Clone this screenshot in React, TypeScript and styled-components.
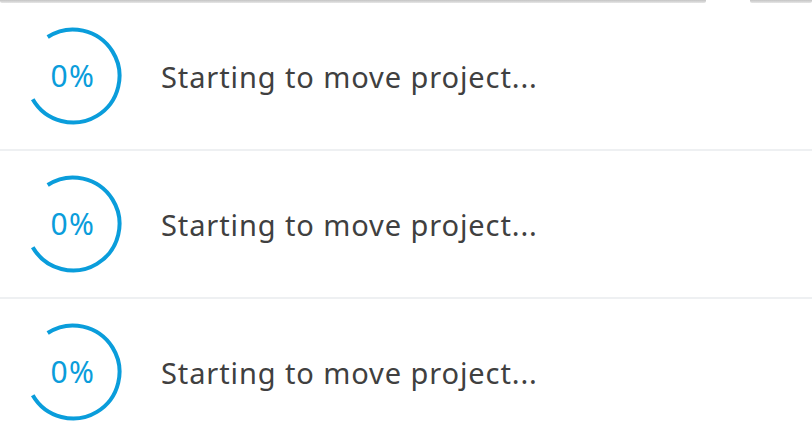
import { createGlobalStyle, styled } from "styled-components"

const GlobalStyle = createGlobalStyle`
  html, body {
    margin: 0;
    padding: 0;
    background: #ffffff;
  }
  body {
    font-family: "Noto Sans", "Open Sans", sans-serif;
    overflow: hidden;
  }
`

const Panel = styled.div`
  width: 812px;
  display: flex;
  flex-flow: column nowrap;
`

const TopEdge = styled.div`
  display: flex;
  gap: 44px;
  height: 3px;
`

const EdgeSegment = styled.div<{ $width?: number }>`
  height: 3px;
  flex: ${p => (p.$width ? `0 0 ${p.$width}px` : "1 1 auto")};
  background: linear-gradient(to bottom, #c4c4c4, #e6e6e6);
  border-radius: 0 0 2px 2px;
`

const Row = styled.div`
  display: flex;
  align-items: center;
  height: 146px;
  padding-left: 24px;
  gap: 39px;
  border-bottom: 2px solid #eef0f2;
  box-sizing: content-box;
`

const Spinner = styled.div`
  position: relative;
  width: 98px;
  height: 98px;
  flex: 0 0 98px;
  display: flex;
  align-items: center;
  justify-content: center;
`

const Ring = styled.svg`
  position: absolute;
  inset: 0;
`

const Percent = styled.span`
  font-size: 30px;
  letter-spacing: 1.5px;
  color: #0a9ddb;
  line-height: 1;
  margin-left: 0;
`

const Message = styled.span`
  font-size: 29px;
  letter-spacing: 0.9px;
  color: #404040;
  line-height: 1;
`

// arc from -123deg clockwise to 150deg, radius 46.5 around the centre
const arcPath = (() => {
  const cx = 49
  const cy = 49
  const r = 46.5
  const a0 = (-123 * Math.PI) / 180
  const a1 = (150 * Math.PI) / 180
  const x0 = cx + r * Math.cos(a0)
  const y0 = cy + r * Math.sin(a0)
  const x1 = cx + r * Math.cos(a1)
  const y1 = cy + r * Math.sin(a1)
  return `M ${x0} ${y0} A ${r} ${r} 0 1 1 ${x1} ${y1}`
})()

const ProgressRow = ({ percent, text }: { percent: number; text: string }) => (
  <Row>
    <Spinner>
      <Ring width="98" height="98" viewBox="0 0 98 98">
        <path d={arcPath} fill="none" stroke="#0a9ddb" strokeWidth="4" />
      </Ring>
      <Percent>{percent}%</Percent>
    </Spinner>
    <Message>{text}</Message>
  </Row>
)

const jobs = [
  { id: 1, percent: 0, text: "Starting to move project..." },
  { id: 2, percent: 0, text: "Starting to move project..." },
  { id: 3, percent: 0, text: "Starting to move project..." },
]

export default function App() {
  return (
    <>
      <GlobalStyle />
      <Panel>
        <TopEdge>
          <EdgeSegment $width={706} />
          <EdgeSegment />
        </TopEdge>
        {jobs.map(job => (
          <ProgressRow key={job.id} percent={job.percent} text={job.text} />
        ))}
      </Panel>
    </>
  )
}
